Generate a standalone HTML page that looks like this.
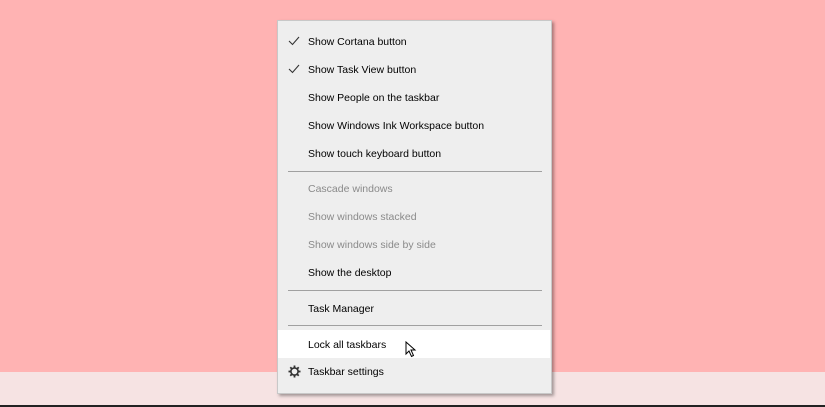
<!DOCTYPE html>
<html><head><style>
body{margin:0;width:825px;height:407px;background:#ffb3b3;position:relative;overflow:hidden;font-family:"Liberation Sans",sans-serif;font-size:10.5px;color:#000}
.strip{position:absolute;left:0;top:372px;width:825px;height:33px;background:#f6e3e3}
.bl{position:absolute;left:0;top:405px;width:825px;height:2px;background:#222}
.menu{position:absolute;left:277px;top:20px;width:273px;height:372px;background:#eeeeee;border:1px solid #c8c8c8;box-shadow:2px 2px 3px rgba(0,0,0,.35)}
.it{position:absolute;left:30px;line-height:14px;white-space:nowrap}
.g{color:#8a8a8a}
.sep{position:absolute;left:10px;width:254px;height:1px;background:#a0a0a0}
.hl{position:absolute;left:0;top:309px;width:272px;height:28px;background:#fff}
.ck{position:absolute;left:10px}
</style></head><body>
<div class="strip"></div><div class="bl"></div>
<div class="menu">
<div class="hl"></div>
<svg class="ck" style="top:15px" width="12" height="10"><path d="M1 5 L4.5 8.5 L11 1" stroke="#333" stroke-width="1.1" fill="none"/></svg>
<svg class="ck" style="top:43px" width="12" height="10"><path d="M1 5 L4.5 8.5 L11 1" stroke="#333" stroke-width="1.1" fill="none"/></svg>
<div class="it" style="top:14px">Show Cortana button</div>
<div class="it" style="top:42px">Show Task View button</div>
<div class="it" style="top:70px">Show People on the taskbar</div>
<div class="it" style="top:98px">Show Windows Ink Workspace button</div>
<div class="it" style="top:126px">Show touch keyboard button</div>
<div class="sep" style="top:150px"></div>
<div class="it g" style="top:161px">Cascade windows</div>
<div class="it g" style="top:189px">Show windows stacked</div>
<div class="it g" style="top:217px">Show windows side by side</div>
<div class="it" style="top:245px">Show the desktop</div>
<div class="sep" style="top:269px"></div>
<div class="it" style="top:281px">Task Manager</div>
<div class="sep" style="top:304px"></div>
<div class="it" style="top:317px">Lock all taskbars</div>
<svg style="position:absolute;left:127px;top:320px" width="12" height="18"><path d="M1 1 L1 13 L4 10 L6.5 15.5 L8.5 14.5 L6 9 L10 9 Z" fill="#fff" stroke="#000" stroke-width="1"/></svg>
<div class="it" style="top:344px">Taskbar settings</div>
<svg style="position:absolute;left:10px;top:344px" width="13" height="13" viewBox="0 0 13 13"><circle cx="6.5" cy="6.5" r="3.6" fill="none" stroke="#333" stroke-width="1.6"/><circle cx="6.5" cy="6.5" r="1.3" fill="#eee"/><g stroke="#333" stroke-width="1.8"><line x1="6.5" y1="0.5" x2="6.5" y2="3"/><line x1="6.5" y1="10" x2="6.5" y2="12.5"/><line x1="0.5" y1="6.5" x2="3" y2="6.5"/><line x1="10" y1="6.5" x2="12.5" y2="6.5"/><line x1="2.3" y1="2.3" x2="4" y2="4"/><line x1="9" y1="9" x2="10.7" y2="10.7"/><line x1="2.3" y1="10.7" x2="4" y2="9"/><line x1="9" y1="4" x2="10.7" y2="2.3"/></g></svg>
</div>
</body></html>
